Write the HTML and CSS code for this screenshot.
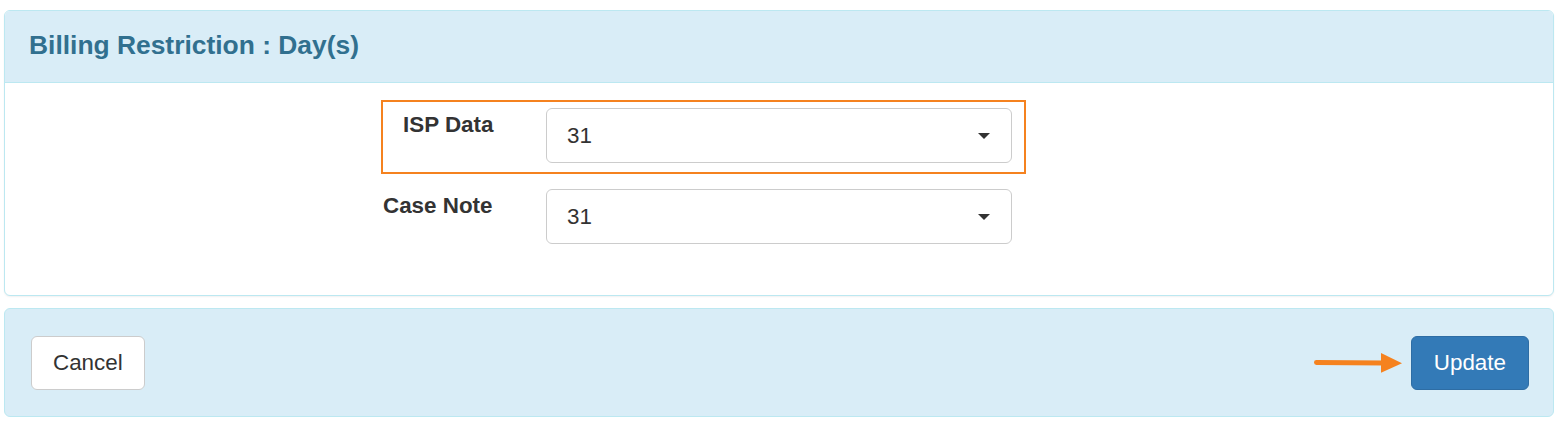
FILE: index.html
```html
<!DOCTYPE html>
<html>
<head>
  <title>Billing Restriction</title>
  <meta name="viewport" content="width=device-width, initial-scale=1">
  <link rel="stylesheet" href="styles.css">
</head>
<body>
  <div class="page">
    <div class="panel">
      <div class="panel-heading">
        <h3 class="panel-title">Billing Restriction : Day(s)</h3>
      </div>
      <div class="panel-body">
        <form class="form">
          <div class="form-row highlight">
            <label class="form-label" for="isp">ISP Data</label>
            <div class="select-wrap">
              <select id="isp" class="form-control">
                <option>31</option>
              </select>
              <span class="caret"></span>
            </div>
          </div>
          <div class="form-row">
            <label class="form-label" for="note">Case Note</label>
            <div class="select-wrap">
              <select id="note" class="form-control">
                <option>31</option>
              </select>
              <span class="caret"></span>
            </div>
          </div>
        </form>
      </div>
    </div>

    <div class="panel-footer">
      <button class="btn btn-default" type="button">Cancel</button>
      <div class="actions">
        <svg class="arrow" width="90" height="22" viewBox="0 0 90 22">
          <path d="M2.5 10.4 L70 11.1" stroke="#f5821f" stroke-width="5" stroke-linecap="round" fill="none"/>
          <path d="M67 1 L88 11.2 L67 20.8 Z" fill="#f5821f"/>
        </svg>
        <button class="btn btn-primary" type="button">Update</button>
      </div>
    </div>
  </div>
</body>
</html>
```

FILE: styles.css
```css
body { margin: 0; background: #fff; font-family: "Liberation Sans", Arial, sans-serif; font-size: 22.4px; line-height: 1.43; color: #333; }
.page { padding: 10px 6px 0 4px; }

.panel { background: #fff; border: 1px solid #bce8f1; border-radius: 6px; box-shadow: 0 1px 2px rgba(0,0,0,0.06); overflow: hidden; }
.panel-heading { background: #d9edf7; border-bottom: 1px solid #bce8f1; padding: 20px 24px 22px; }
.panel-title { margin: 0; font-size: 26.4px; line-height: 29px; font-weight: bold; color: #31708f; }
.panel-body { padding: 17px 0 51px 378px; }

.form-row { display: flex; align-items: flex-start; width: 629px; }
.form-row + .form-row { margin-top: 15px; }
.form-row.highlight { border: 2px solid #f5821f; margin: 0 -14px 0 -2px; padding: 6px 12px 9px 0; }
.form-label { flex: 0 0 163px; box-sizing: border-box; padding-top: 1px; font-weight: bold; color: #333; }
.highlight .form-label { padding-left: 20px; }

.select-wrap { position: relative; flex: 0 0 466px; }
.form-control { display: block; width: 100%; height: 55px; box-sizing: border-box; padding: 0 20px; border: 1px solid #ccc; border-radius: 6px; background: #fff; font-family: inherit; font-size: 22.4px; color: #333; -webkit-appearance: none; appearance: none; }
.caret { position: absolute; right: 22px; top: 25px; width: 0; height: 0; border-left: 6.5px solid transparent; border-right: 6.5px solid transparent; border-top: 6.5px solid #333; pointer-events: none; }

.panel-footer { display: flex; justify-content: space-between; align-items: center; margin-top: 12px; padding: 27px 24px 26px 26px; background: #d9edf7; border: 1px solid #bce8f1; border-radius: 6px; }
.actions { display: flex; align-items: center; gap: 7px; }
.arrow { display: block; }

.btn { font-family: inherit; font-size: 22.4px; line-height: 32px; padding: 10px 21px; border-radius: 6px; border: 1px solid transparent; cursor: pointer; }
.btn-default { background: #fff; border-color: #ccc; color: #333; }
.btn-primary { background: #337ab7; border-color: #2e6da4; color: #fff; padding: 10px 22px; }
```
